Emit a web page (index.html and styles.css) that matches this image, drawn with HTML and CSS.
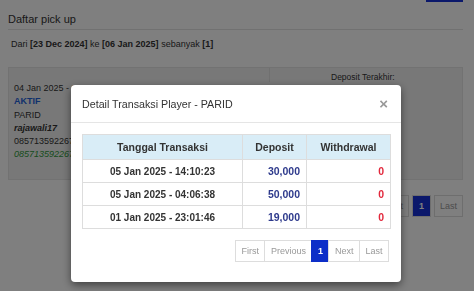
FILE: index.html
```html
<!DOCTYPE html>
<html lang="id">
<head>
  <meta charset="UTF-8">
  <meta name="viewport" content="width=device-width, initial-scale=1.0">
  <title>Daftar pick up</title>
  <link rel="stylesheet" href="styles.css">
</head>
<body>
  <div class="page">
    <div class="topbar"><span class="top-btn"></span></div>
    <h3 class="page-title">Daftar pick up</h3>
    <p class="range">Dari <b>[23 Dec 2024]</b> ke <b>[06 Jan 2025]</b> sebanyak <b>[1]</b></p>

    <div class="panel">
      <div class="panel-head">
        <div class="head-cell"></div>
        <div class="head-cell head-right">Deposit Terakhir:</div>
      </div>
      <div class="panel-body">
        <div>04 Jan 2025 - 09:14:55</div>
        <div class="status">AKTIF</div>
        <div>PARID</div>
        <div class="user">rajawali17</div>
        <div>085713592267</div>
        <div class="phone-green">085713592267</div>
      </div>
    </div>

    <div class="bg-pager">
      <span class="bg-page">First</span>
      <span class="bg-page bg-active">1</span>
      <span class="bg-page">Last</span>
    </div>
  </div>

  <!-- Modal detail transaksi -->
  <div class="overlay">
    <div class="modal">
      <div class="modal-header">
        <span class="modal-title">Detail Transaksi Player - PARID</span>
        <span class="close">&times;</span>
      </div>
      <div class="modal-body">
        <table class="trx-table">
          <thead>
            <tr>
              <th class="col-date">Tanggal Transaksi</th>
              <th class="col-dep">Deposit</th>
              <th class="col-wd">Withdrawal</th>
            </tr>
          </thead>
          <tbody>
            <tr>
              <td class="date">05 Jan 2025 - 14:10:23</td>
              <td class="dep">30,000</td>
              <td class="wd">0</td>
            </tr>
            <tr>
              <td class="date">05 Jan 2025 - 04:06:38</td>
              <td class="dep">50,000</td>
              <td class="wd">0</td>
            </tr>
            <tr>
              <td class="date">01 Jan 2025 - 23:01:46</td>
              <td class="dep">19,000</td>
              <td class="wd">0</td>
            </tr>
          </tbody>
        </table>
        <div class="pager">
          <span class="page-item">First</span>
          <span class="page-item">Previous</span>
          <span class="page-item active">1</span>
          <span class="page-item">Next</span>
          <span class="page-item">Last</span>
        </div>
      </div>
    </div>
  </div>
</body>
</html>
```

FILE: styles.css
```css
body {
  margin: 0;
  background: #fff;
  font-family: "Liberation Sans", Arial, sans-serif;
  color: #333;
}
.page {
  padding: 0 11px 0 8px;
}
.topbar {
  display: flex;
  justify-content: flex-end;
}
.top-btn {
  display: block;
  width: 37px;
  height: 2px;
  background: #1630d6;
}
.page-title {
  margin: 11px 0 0;
  padding-bottom: 4px;
  font-size: 11px;
  font-weight: normal;
  border-bottom: 1px solid #e2e2e2;
}
.range {
  margin: 9px 0 0 3px;
  font-size: 9px;
}
.panel {
  margin-top: 18px;
  background: #f1f1f1;
  border: 1px solid #e4e4e4;
}
.panel-head {
  display: grid;
  grid-template-columns: 261px 1fr;
  height: 14px;
}
.head-cell {
  border-right: 1px solid #e0e0e0;
}
.head-right {
  border-right: none;
  padding: 4px 0 0 61px;
  font-size: 8.5px;
}
.panel-body {
  padding: 0 5px;
  height: 97px;
  font-size: 9px;
  line-height: 13.3px;
}
.status {
  color: #1f62d8;
  font-weight: bold;
}
.user {
  font-weight: bold;
  font-style: italic;
}
.phone-green {
  color: #2f9a3a;
  font-style: italic;
}
.bg-pager {
  display: flex;
  justify-content: flex-end;
  gap: 3px;
  margin-top: 15px;
  font-size: 9px;
}
.bg-page {
  padding: 5px 5px;
  border: 1px solid #ddd;
  color: #999;
}
.bg-active {
  background: #1630d6;
  color: #fff;
  font-weight: bold;
  padding: 5px 6px;
}

.overlay {
  position: fixed;
  top: 0;
  left: 0;
  right: 0;
  bottom: 0;
  background: rgba(0, 0, 0, 0.5);
  display: flex;
  align-items: flex-start;
  padding: 85px 0 0 71px;
}
.modal {
  width: 330px;
  background: #fff;
  border-radius: 4px;
  box-shadow: 0 3px 9px rgba(0, 0, 0, 0.5);
}
.modal-header {
  display: flex;
  justify-content: space-between;
  align-items: center;
  height: 37px;
  padding: 0 11px;
  border-bottom: 1px solid #e5e5e5;
}
.modal-title {
  font-size: 10.7px;
  color: #333;
}
.close {
  font-size: 15px;
  font-weight: bold;
  color: #999;
  margin-right: 2px;
}
.modal-body {
  padding: 11px 10px 20px 11px;
}
.trx-table {
  width: 100%;
  border-collapse: collapse;
  font-size: 10.5px;
}
.trx-table th {
  background: #d9edf7;
  height: 24px;
  padding: 0;
  font-weight: bold;
  border: 1px solid #ddd;
  color: #333;
}
.trx-table td {
  height: 22px;
  padding: 0 6px;
  border: 1px solid #ddd;
  font-weight: bold;
}
.col-date {
  width: 159px;
}
.col-dep {
  width: 63px;
}
.trx-table .date {
  text-align: center;
  font-size: 10px;
  color: #333;
}
.trx-table .dep {
  text-align: right;
  color: #2e3a8c;
}
.trx-table .wd {
  text-align: right;
  color: #e2283c;
}
.pager {
  display: flex;
  justify-content: flex-end;
  margin: 11px 2px 0 0;
  font-size: 9px;
}
.page-item {
  padding: 5px 5.5px;
  border: 1px solid #ddd;
  margin-left: -1px;
  color: #999;
}
.page-item.active {
  background: #0d2ec8;
  border-color: #0d2ec8;
  color: #fff;
  font-weight: bold;
}
```
